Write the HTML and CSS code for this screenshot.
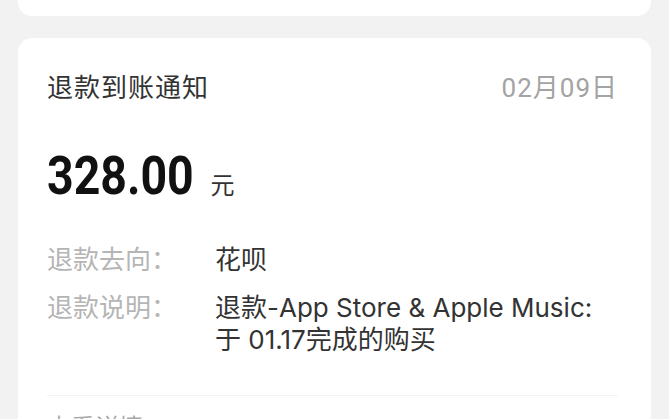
FILE: index.html
```html
<!DOCTYPE html>
<html lang="zh-CN">
<head>
    <meta charset="UTF-8">
    <meta name="viewport" content="width=device-width, initial-scale=1.0">
    <title>退款到账通知</title>
    <link rel="stylesheet" href="styles.css">
</head>
<body>

    <!-- Previous message (only its bottom edge shows) -->
    <div class="card card-prev"></div>

    <!-- Refund notice -->
    <div class="card">
        <div class="card-head">
            <span class="card-title">退款到账通知</span>
            <span class="card-date">02月09日</span>
        </div>

        <div class="amount">
            <span class="amount-num">328.00</span>
            <span class="amount-unit">元</span>
        </div>

        <div class="info">
            <div class="info-row">
                <span class="info-label">退款去向：</span>
                <span class="info-value">花呗</span>
            </div>
            <div class="info-row">
                <span class="info-label">退款说明：</span>
                <span class="info-value">退款-App Store &amp; Apple Music:<br>于 01.17完成的购买</span>
            </div>
        </div>

        <div class="card-foot">查看详情</div>
    </div>

</body>
</html>
```

FILE: styles.css
```css
/* Basic Styles */
body {
    font-family: Roboto, "Noto Sans CJK SC", sans-serif;
    margin: 0;
    padding: 0;
    background-color: #f2f2f2;
    color: #333;
    overflow: hidden;
}

.card {
    background-color: #fff;
    margin: 0 18px;
    border-radius: 14px;
    padding: 35px 33px 0 29px;
}

.card-prev {
    height: 16px;
    padding: 0;
    border-radius: 0 0 14px 14px;
    margin-bottom: 22px;
}

/* Header */
.card-head {
    display: flex;
    justify-content: space-between;
    align-items: center;
    line-height: 30px;
}

.card-title {
    font-size: 26px;
    letter-spacing: 1px;
    color: #333;
}

.card-date {
    font-size: 26px;
    letter-spacing: 1px;
    color: #a3a3a3;
}

/* Amount */
.amount {
    display: flex;
    align-items: baseline;
    margin-top: 45px;
    line-height: 56px;
}

.amount-num {
    display: inline-block;
    font-family: Roboto, sans-serif;
    font-weight: bold;
    font-size: 54px;
    color: #111;
    transform: scaleX(0.86);
    transform-origin: left center;
    margin-right: -23px;
}

.amount-unit {
    font-size: 24px;
    line-height: 24px;
    color: #333;
    margin-left: 16px;
}

/* Info rows */
.info {
    display: flex;
    flex-direction: column;
    gap: 16px;
    margin-top: 40px;
    padding-bottom: 39px;
    border-bottom: 1px solid #f2f2f2;
}

.info-row {
    display: flex;
    font-size: 26px;
    line-height: 32px;
}

.info-label {
    width: 168px;
    flex-shrink: 0;
    color: #b5b5b5;
}

.info-value {
    font-family: Inter, "Noto Sans CJK SC", sans-serif;
    color: #333;
}

.card-foot {
    padding-top: 16px;
    font-size: 24px;
    line-height: 32px;
    color: #aaa;
}
```
